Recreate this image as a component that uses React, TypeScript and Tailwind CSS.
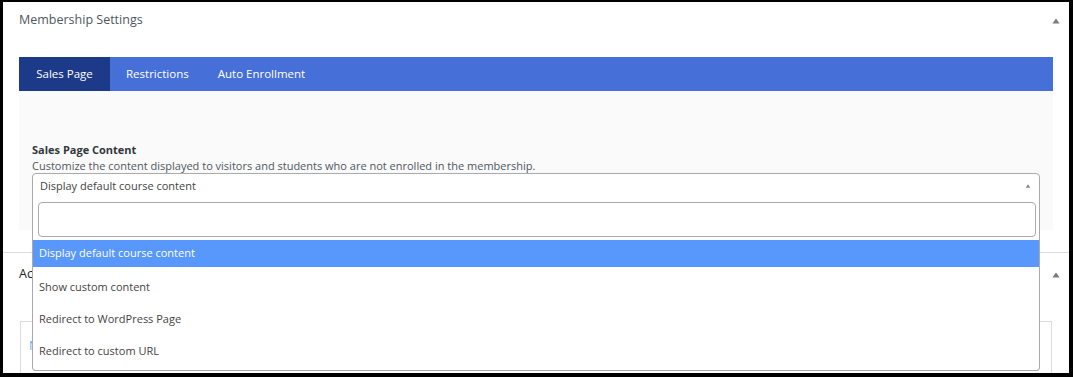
import React from 'react';

const font = { fontFamily: '"Open Sans", "Noto Sans", sans-serif' };

function Caret({ className }: { className?: string }) {
  return (
    <svg viewBox="0 0 8 6" className={className}>
      <path d="M4 0.5 L7.6 5.5 L0.4 5.5 Z" fill="currentColor" />
    </svg>
  );
}

const options = [
  'Display default course content',
  'Show custom content',
  'Redirect to WordPress Page',
  'Redirect to custom URL',
];

export default function App() {
  return (
    <div className="w-[1073px] h-[377px] bg-black pl-[3px] pt-[2px] pr-[4px] pb-[4px]" style={font}>
      <div className="relative h-full bg-white overflow-hidden">
        {/* Membership Settings box */}
        <div className="h-[37px] flex items-center justify-between pl-4 pr-[9px]">
          <span className="text-[12.5px] text-[#50575e]">Membership Settings</span>
          <Caret className="w-[8px] h-[6px] text-[#787c82]" />
        </div>

        <div className="px-4 pt-[18px]">
          <div className="flex h-[34px] bg-[#476fd8] text-white text-[11.5px]">
            <div className="w-[91px] flex items-center justify-center bg-[#1d3a89]">Sales Page</div>
            <div className="pl-4 pr-[13px] flex items-center">Restrictions</div>
            <div className="px-4 flex items-center">Auto Enrollment</div>
          </div>

          <div className="relative h-[139px] bg-[#fafafa] px-[13px] pt-[51px]">
            <div className="text-[11px] font-bold text-[#32373c] leading-[16px]">Sales Page Content</div>
            <div className="text-[11px] text-[#50575e] leading-[15px]">
              Customize the content displayed to visitors and students who are not enrolled in the membership.
            </div>
            <div className="relative w-[1008px]">
              <div className="h-[26px] bg-white border border-[#aaa] rounded-t-[4px] flex items-center justify-between pl-[7px] pr-[8px] text-[11px] text-[#444]">
                <span className="pt-[1px]">Display default course content</span>
                <Caret className="w-[6px] h-[4px] text-[#888]" />
              </div>
              {/* open dropdown */}
              <div className="absolute left-0 top-[25px] z-10 w-full h-[173px] bg-white border border-[#aaa] border-t-0 rounded-b-[4px] text-[11px] text-[#444]">
                <div className="pt-[4px] pl-[5px] pr-[3px] pb-[3px]">
                  <div className="h-[35px] border border-[#aaa] rounded-[4px] bg-white" />
                </div>
                <div className="h-[27px] flex items-center px-[6px] bg-[#5897fb] text-white">{options[0]}</div>
                <div className="pt-[4px]">
                  {options.slice(1).map((o) => (
                    <div key={o} className="h-[32px] flex items-center px-[6px]">
                      {o}
                    </div>
                  ))}
                </div>
              </div>
            </div>
          </div>
        </div>

        {/* Access Plans box */}
        <div className="mt-[22px] border-t border-[#dcdcde]">
          <div className="h-[41px] flex items-center justify-between pl-4 pr-[9px] pt-[2px]">
            <span className="text-[12.5px] text-[#1d2327]">Access Plans</span>
            <Caret className="w-[8px] h-[6px] text-[#787c82]" />
          </div>
          <div className="mx-[17px] mt-[27px] h-[60px] border border-[#dcdcde] px-[8px] pt-[10px]">
            <span className="text-[12.5px] text-[#72aee6]">No access plans</span>
          </div>
        </div>
      </div>
    </div>
  );
}
